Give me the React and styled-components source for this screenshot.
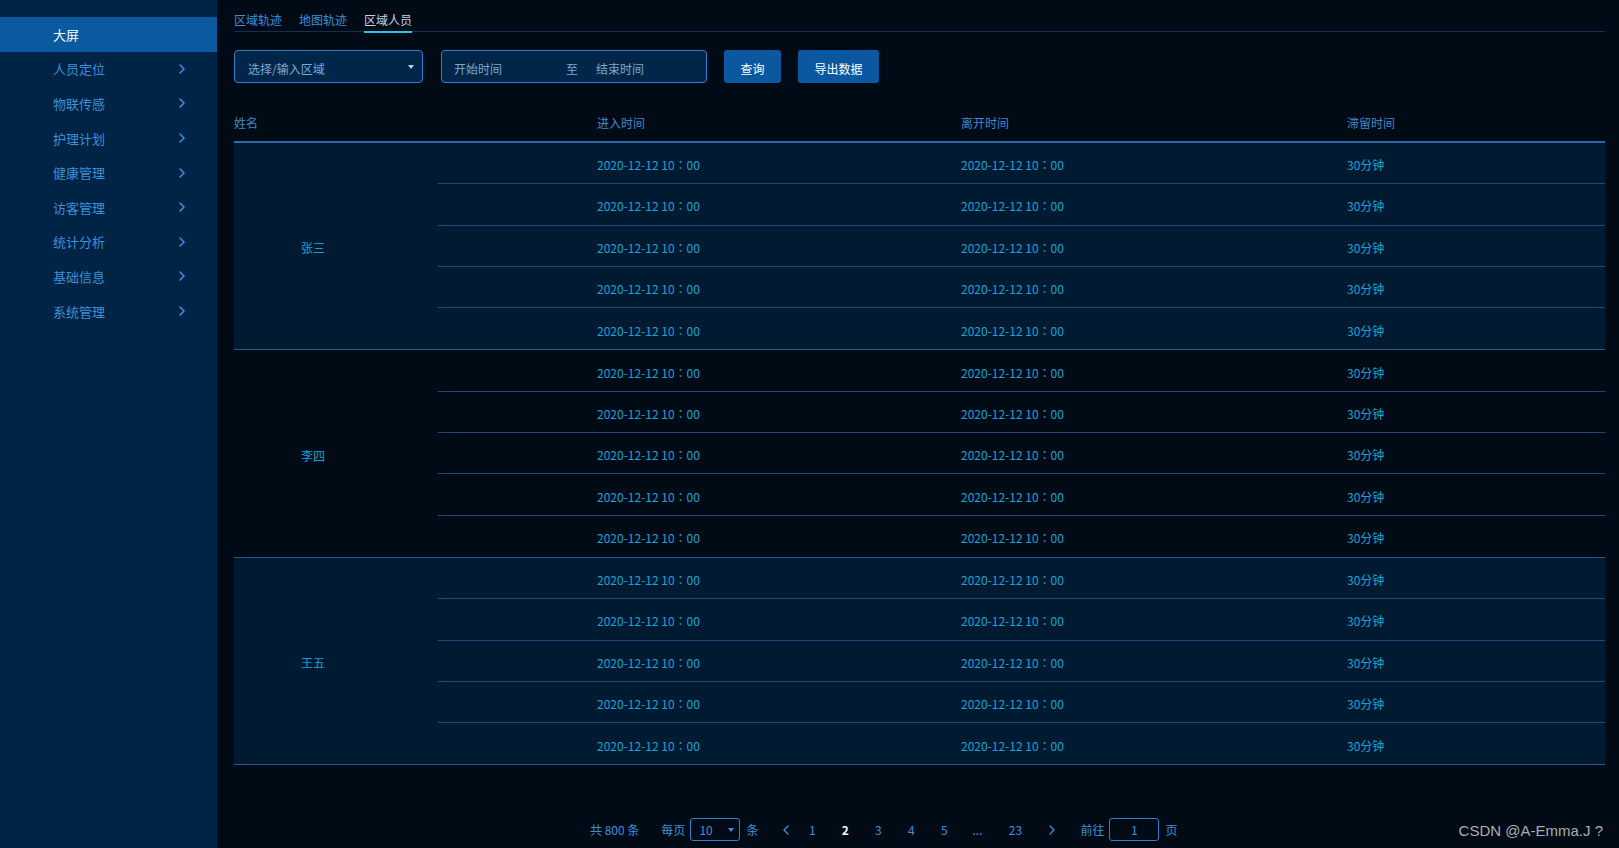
import React from 'react';
import styled, { createGlobalStyle } from 'styled-components';
import { ChevronRight, ChevronLeft } from 'lucide-react';

const GlobalStyle = createGlobalStyle`
  html, body { margin: 0; padding: 0; background: #010b16; }
  body { font-family: "Noto Sans CJK SC", "Noto Sans", sans-serif; }
  * { box-sizing: border-box; }
`;

const Layout = styled.div`
  position: relative;
  display: flex;
  height: 848px;
  overflow: hidden;
  background: #010b16;
`;

const Sidebar = styled.aside`
  width: 217px;
  flex: none;
  background: #002445;
  padding-top: 17px;
`;

const MenuItem = styled.div`
  height: 34.6px;
  display: flex;
  align-items: center;
  justify-content: space-between;
  padding: 0 27px 0 53px;
  font-size: 13px;
  color: ${p => (p.$active ? '#ffffff' : '#3d8fd9')};
  background: ${p => (p.$active ? '#0b5aa0' : 'transparent')};
  svg { color: #3d8fd9; }
`;

const Main = styled.main`
  flex: 1;
  min-width: 0;
  display: flex;
  flex-direction: column;
  padding: 0 14px 0 17px;
`;

const Tabs = styled.div`
  display: flex;
  align-items: flex-start;
  gap: 17px;
  height: 32px;
  border-bottom: 1px solid #0b3358;
`;

const Tab = styled.div`
  height: 33px;
  padding-top: 11px;
  font-size: 12px;
  line-height: 17px;
  color: ${p => (p.$active ? '#c8d4e0' : '#3d8fd9')};
  border-bottom: 2px solid ${p => (p.$active ? '#1ec8e8' : 'transparent')};
`;

const FilterRow = styled.div`
  display: flex;
  align-items: center;
  gap: 17px;
  margin-top: 18px;
  height: 33px;
`;

const Field = styled.div`
  height: 33px;
  border: 1px solid #2f7fd0;
  border-radius: 4px;
  background: #022649;
  color: #7aa8d4;
  font-size: 12px;
  display: flex;
  align-items: center;
  padding-top: 3px;
`;

const SelectBox = styled(Field)`
  width: 189px;
  margin-right: 1px;
  justify-content: space-between;
  padding-left: 13px;
  padding-right: 8px;
`;

const Caret = styled.span`
  width: 0;
  height: 0;
  margin-top: ${p => (p.$up ? -3 : 0)}px;
  border-left: 3.5px solid transparent;
  border-right: 3.5px solid transparent;
  border-top: 4px solid ${p => p.$color || '#b8d0e8'};
`;

const RangeBox = styled(Field)`
  width: 266px;
  display: grid;
  grid-template-columns: 112px 30px 1fr;
  padding-left: 12px;
`;

const Button = styled.button`
  height: 33px;
  padding: 3px 16.5px 0;
  border: none;
  border-radius: 3px;
  background: #0b57a0;
  color: #ffffff;
  font-family: inherit;
  font-size: 12px;
  cursor: pointer;
`;

const HeaderRow = styled.div`
  display: grid;
  grid-template-columns: 363px 364px 386px 1fr;
  align-items: end;
  height: 60px;
  padding-bottom: 10px;
  border-bottom: 2px solid #2c6aa6;
  font-size: 12px;
  line-height: 17px;
  color: #3f88cc;
`;

const Group = styled.div`
  display: flex;
  border-bottom: 1px solid #245a8e;
  background: ${p => (p.$alt ? '#001a31' : 'transparent')};
`;

const NameCell = styled.div`
  width: 204px;
  flex: none;
  display: flex;
  align-items: center;
  padding: 3px 0 0 67px;
  font-size: 12px;
  color: #14a5d6;
`;

const Rows = styled.div`
  flex: 1;
`;

const Row = styled.div`
  height: 41.3px;
  display: grid;
  grid-template-columns: 364px 386px 1fr;
  align-items: center;
  padding: 3px 0 0 159px;
  border-bottom: 1px solid #1b4a78;
  font-size: 12px;
  color: #14a5d6;
  &:last-child { border-bottom: none; }
`;

const TimeText = styled.span`
  font-family: "Noto Sans CJK TC", "Noto Sans CJK SC", sans-serif;
`;

const Pagination = styled.div`
  margin-top: auto;
  margin-bottom: 7px;
  height: 23px;
  display: flex;
  align-items: center;
  padding-left: 356px;
  font-size: 12px;
  color: #3d8fd9;
`;

const PLabel = styled.span`
  margin-left: ${p => p.$ml || 0}px;
  white-space: pre;
`;

const SmallBox = styled.div`
  width: 50px;
  height: 23px;
  margin-left: ${p => p.$ml || 0}px;
  border: 1px solid #2f7fd0;
  border-radius: 3px;
  display: flex;
  align-items: center;
  justify-content: ${p => (p.$center ? 'center' : 'space-between')};
  padding: ${p => (p.$center ? '0' : '0 5px 0 8px')};
  color: #3d8fd9;
`;

const Pager = styled.div`
  display: flex;
  align-items: center;
  margin-left: 18.5px;
`;

const PageBtn = styled.span`
  width: ${p => p.$w || 33}px;
  display: flex;
  justify-content: center;
  align-items: center;
  color: ${p => (p.$active ? '#eef2f7' : '#3d8fd9')};
  font-weight: ${p => (p.$active ? 600 : 400)};
`;

const Watermark = styled.div`
  position: absolute;
  right: 16px;
  bottom: 8px;
  font-family: "Liberation Sans", Arial, sans-serif;
  font-size: 15px;
  line-height: 18px;
  color: #a9adb2;
`;

const menus = ['人员定位', '物联传感', '护理计划', '健康管理', '访客管理', '统计分析', '基础信息', '系统管理'];
const groups = ['张三', '李四', '王五'];
const T = '2020-12-12 10：00';

export default function App() {
  return (
    <Layout>
      <GlobalStyle />
      <Sidebar>
        <MenuItem $active>大屏</MenuItem>
        {menus.map(m => (
          <MenuItem key={m}>
            {m}
            <ChevronRight size={16} strokeWidth={2.4} />
          </MenuItem>
        ))}
      </Sidebar>
      <Main>
        <Tabs>
          <Tab>区域轨迹</Tab>
          <Tab>地图轨迹</Tab>
          <Tab $active>区域人员</Tab>
        </Tabs>
        <FilterRow>
          <SelectBox>
            <span>选择/输入区域</span>
            <Caret $up />
          </SelectBox>
          <RangeBox>
            <span>开始时间</span>
            <span>至</span>
            <span>结束时间</span>
          </RangeBox>
          <Button>查询</Button>
          <Button>导出数据</Button>
        </FilterRow>
        <HeaderRow>
          <span>姓名</span>
          <span>进入时间</span>
          <span>离开时间</span>
          <span>滞留时间</span>
        </HeaderRow>
        {groups.map((g, gi) => (
          <Group key={g} $alt={gi % 2 === 0}>
            <NameCell>{g}</NameCell>
            <Rows>
              {[0, 1, 2, 3, 4].map(i => (
                <Row key={i}>
                  <TimeText>{T}</TimeText>
                  <TimeText>{T}</TimeText>
                  <span>30分钟</span>
                </Row>
              ))}
            </Rows>
          </Group>
        ))}
        <Pagination>
          <PLabel>共 800 条</PLabel>
          <PLabel $ml={22}>每页</PLabel>
          <SmallBox $ml={5}>
            <span>10</span>
            <Caret $color="#3d8fd9" />
          </SmallBox>
          <PLabel $ml={6}>条</PLabel>
          <Pager>
            <PageBtn $w={19}><ChevronLeft size={16} strokeWidth={2} /></PageBtn>
            <PageBtn>1</PageBtn>
            <PageBtn $active>2</PageBtn>
            <PageBtn>3</PageBtn>
            <PageBtn>4</PageBtn>
            <PageBtn>5</PageBtn>
            <PageBtn>...</PageBtn>
            <PageBtn $w={43}>23</PageBtn>
            <PageBtn $w={31}><ChevronRight size={16} strokeWidth={2} /></PageBtn>
          </Pager>
          <PLabel $ml={12.5}>前往</PLabel>
          <SmallBox $ml={5} $center>1</SmallBox>
          <PLabel $ml={6}>页</PLabel>
        </Pagination>
      </Main>
      <Watermark>CSDN @A-Emma.J ?</Watermark>
    </Layout>
  );
}
